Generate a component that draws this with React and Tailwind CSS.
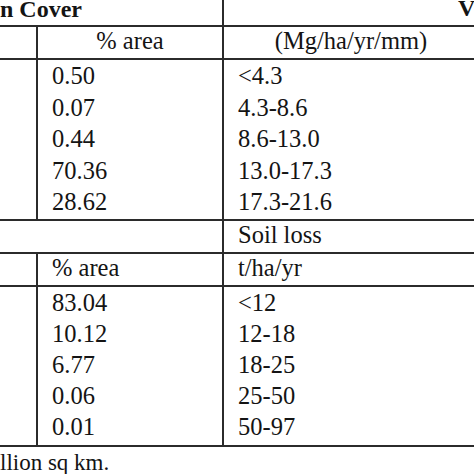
const coverRows = [
  ["0.50", "<4.3"],
  ["0.07", "4.3-8.6"],
  ["0.44", "8.6-13.0"],
  ["70.36", "13.0-17.3"],
  ["28.62", "17.3-21.6"],
];

const lossRows = [
  ["83.04", "<12"],
  ["10.12", "12-18"],
  ["6.77", "18-25"],
  ["0.06", "25-50"],
  ["0.01", "50-97"],
];

function App() {
  return (
    <div className="h-[474px] w-[474px] overflow-hidden bg-white font-['Liberation_Serif',serif] text-[24.5px] text-[#141414]">
      <div className="w-[478px]">
        {/* title row */}
        <div className="grid h-[27px] grid-cols-[222px_1fr] border-b-2 border-[#2b2b2b]">
          <div className="whitespace-nowrap text-[24px] font-bold leading-[19px]">n Cover</div>
          <div className="border-l-2 border-[#2b2b2b] pl-[234px] text-[24px] font-bold leading-[16px]">V</div>
        </div>

        {/* units row */}
        <div className="grid h-[33px] grid-cols-[36px_186px_1fr] border-b-2 border-[#2b2b2b] leading-[28px]">
          <div />
          <div className="border-l-2 border-[#2b2b2b] text-center">% area</div>
          <div className="border-l-2 border-[#2b2b2b] text-center whitespace-nowrap">(Mg/ha/yr/mm)</div>
        </div>

        {/* land cover values */}
        <div className="grid h-[161px] grid-cols-[36px_186px_1fr] border-b-2 border-[#2b2b2b] leading-[31.5px]">
          <div />
          <div className="border-l-2 border-[#2b2b2b] pl-[14px]">
            {coverRows.map(([area]) => (
              <div key={area}>{area}</div>
            ))}
          </div>
          <div className="border-l-2 border-[#2b2b2b] pl-[14px]">
            {coverRows.map(([, range]) => (
              <div key={range}>{range}</div>
            ))}
          </div>
        </div>

        {/* soil loss heading */}
        <div className="grid h-[33px] grid-cols-[222px_1fr] border-b-2 border-[#2b2b2b] leading-[28px]">
          <div />
          <div className="border-l-2 border-[#2b2b2b] pl-[14px]">Soil loss</div>
        </div>

        <div className="grid h-[33px] grid-cols-[36px_186px_1fr] border-b-2 border-[#2b2b2b] leading-[28px]">
          <div />
          <div className="border-l-2 border-[#2b2b2b] pl-[14px]">% area</div>
          <div className="border-l-2 border-[#2b2b2b] pl-[14px]">t/ha/yr</div>
        </div>

        {/* soil loss values */}
        <div className="grid h-[160px] grid-cols-[36px_186px_1fr] border-b-2 border-[#2b2b2b] leading-[31px]">
          <div />
          <div className="border-l-2 border-[#2b2b2b] pl-[14px]">
            {lossRows.map(([area]) => (
              <div key={area}>{area}</div>
            ))}
          </div>
          <div className="border-l-2 border-[#2b2b2b] pl-[14px]">
            {lossRows.map(([, range]) => (
              <div key={range}>{range}</div>
            ))}
          </div>
        </div>

        <p className="whitespace-nowrap text-[23px] leading-[32px]">llion sq km.</p>
      </div>
    </div>
  );
}

export default App;
